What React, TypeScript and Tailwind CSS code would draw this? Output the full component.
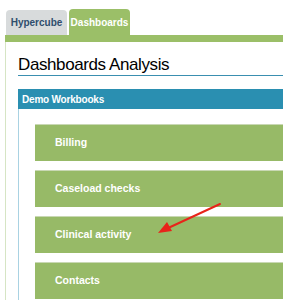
export default function App() {
  const items = ["Billing", "Caseload checks", "Clinical activity", "Contacts"];

  return (
    <div className="relative w-[283px] h-[300px] overflow-hidden bg-white font-['Liberation_Sans',Arial,sans-serif]">
      {/* tabs */}
      <div className="flex items-end gap-[2px] pl-[6px] pt-[9px] text-[10px] font-bold">
        <div className="flex h-[25px] w-[61px] items-center justify-center rounded-t-[4px] bg-[#d8dbdc] text-[#2f4e6d]">
          Hypercube
        </div>
        <div className="flex h-[26px] w-[61px] items-center justify-center rounded-t-[4px] bg-[#9bbf68] text-white">
          Dashboards
        </div>
      </div>
      <div className="ml-[5px] h-[7px] bg-[#9bbf68]" />

      {/* content */}
      <div className="ml-[5px] h-full border-l border-[#d6e5c4] pl-[12px]">
        <div className="border-b border-[#3a8fb0] pt-[13px] text-[17px] leading-[20px] tracking-[-0.4px] text-black">
          Dashboards Analysis
        </div>

        <div className="mt-[13px] flex h-[20px] items-center bg-[#2a8fb1] pl-[4px] text-[10px] font-bold tracking-[-0.2px] text-white">
          Demo Workbooks
        </div>

        <div className="flex h-full flex-col gap-[9px] border-l border-[#a9d2e2] pl-[16px] pt-[15px]">
          {items.map((item) => (
            <div
              key={item}
              className="flex h-[37px] items-center border-t border-[#c9d8b4] bg-[#97ba67] pl-[20px] text-[10.5px] font-bold text-white"
            >
              {item}
            </div>
          ))}
        </div>
      </div>

      {/* red annotation arrow */}
      <svg className="absolute left-0 top-0" width="283" height="300" viewBox="0 0 283 300">
        <line x1="220" y1="204" x2="166" y2="229" stroke="#e8241a" strokeWidth="2" strokeLinecap="round" />
        <polygon points="158,233 167,222 172,231" fill="#e8241a" />
      </svg>
    </div>
  );
}
